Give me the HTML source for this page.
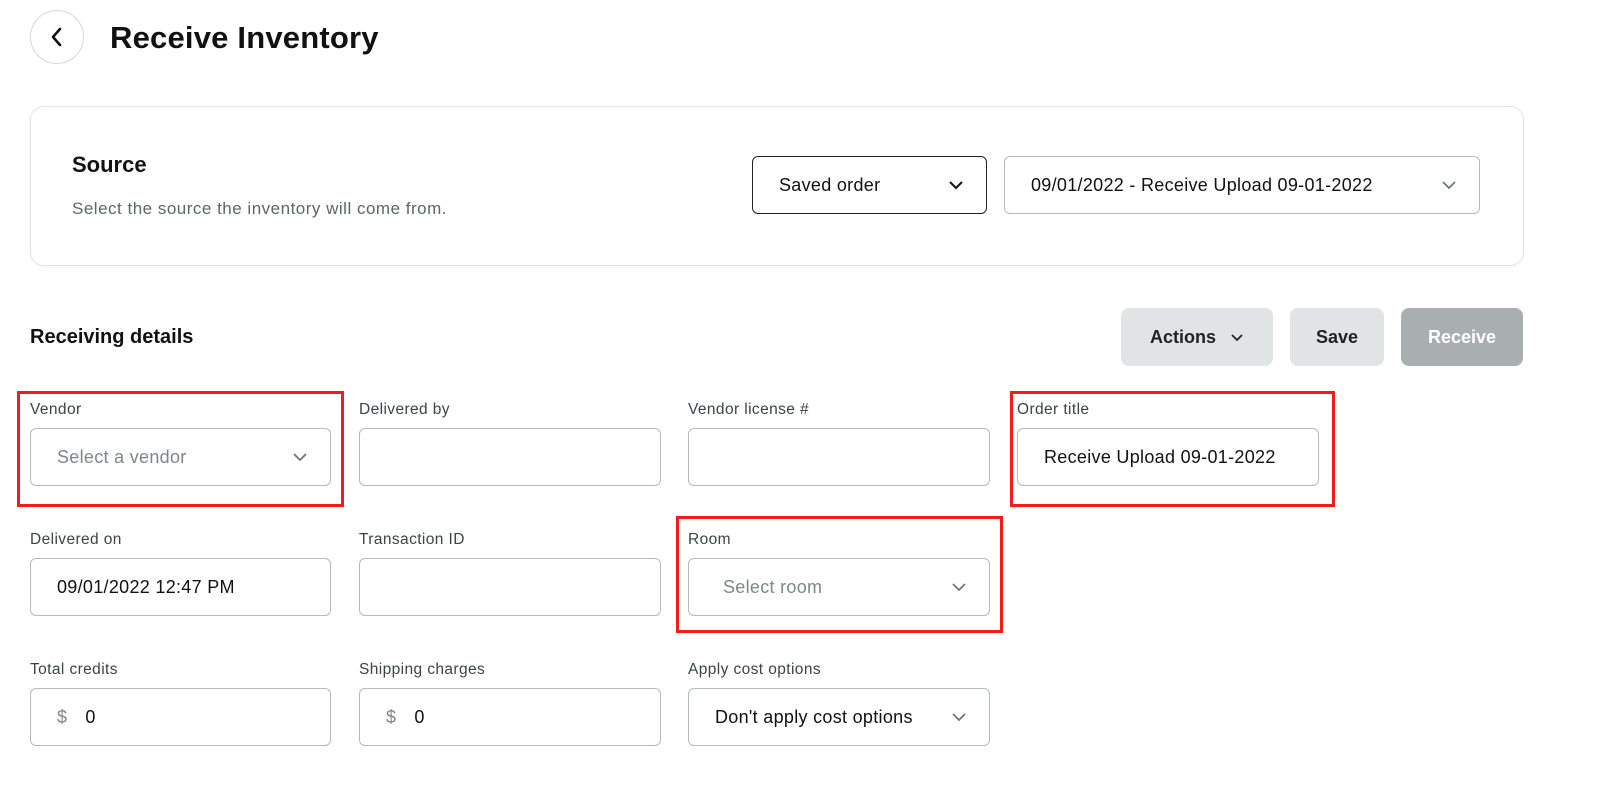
<!DOCTYPE html>
<html><head><style>
*{box-sizing:border-box;margin:0;padding:0}
body{width:1600px;height:792px;background:#fff;font-family:"Liberation Sans",sans-serif;color:#111;position:relative;overflow:hidden}
.a{position:absolute}
.back{left:30px;top:10px;width:54px;height:54px;border:1px solid #d5d9db;border-radius:50%}
h1{position:absolute;left:110px;top:20px;font-size:31px;font-weight:bold;letter-spacing:0.2px}
.card{left:30px;top:106px;width:1494px;height:160px;border:1px solid #e2e5e6;border-radius:14px;box-shadow:0 1px 3px rgba(0,0,0,.05)}
.sel{position:absolute;height:58px;border:1px solid #b5babc;border-radius:6px;font-size:18px;letter-spacing:0.3px;display:flex;align-items:center;padding-left:26px}
.sel svg{position:absolute;right:22px;top:22px}
.lbl{position:absolute;font-size:15.5px;letter-spacing:0.4px;color:#3b4446}
.ph{color:#7d8689}
.btn{position:absolute;top:308px;height:58px;border-radius:8px;background:#e1e4e5;font-size:18px;font-weight:bold;display:flex;align-items:center;justify-content:center;color:#222}
.red{position:absolute;border:3px solid #f21c1c}
</style></head><body>
<div class="a back"><svg width="54" height="54" style="position:absolute;left:-1px;top:-1px"><path d="M30 19 L23 27 L30 35" fill="none" stroke="#111" stroke-width="2.6" stroke-linecap="round" stroke-linejoin="round"/></svg></div>
<h1>Receive Inventory</h1>
<div class="a card"></div>
<div class="a" style="left:72px;top:152px;font-size:22px;font-weight:bold">Source</div>
<div class="a" style="left:72px;top:199px;font-size:17px;letter-spacing:0.5px;color:#5c6769">Select the source the inventory will come from.</div>
<div class="sel" style="left:752px;top:156px;width:235px;border-color:#222">Saved order<svg width="16" height="12"><path d="M2 3 L8 9 L14 3" fill="none" stroke="#111" stroke-width="2"/></svg></div>
<div class="sel" style="left:1004px;top:156px;width:476px">09/01/2022 - Receive Upload 09-01-2022<svg width="16" height="12"><path d="M2 3 L8 9 L14 3" fill="none" stroke="#6d7679" stroke-width="1.8"/></svg></div>
<div class="a" style="left:30px;top:326px;font-size:20px;font-weight:bold">Receiving details</div>
<div class="btn" style="left:1121px;width:152px">Actions<svg width="14" height="10" style="margin-left:14px"><path d="M2 3 L7 8 L12 3" fill="none" stroke="#222" stroke-width="1.8"/></svg></div>
<div class="btn" style="left:1290px;width:94px">Save</div>
<div class="btn" style="left:1401px;width:122px;background:#a9afb1;color:#fff">Receive</div>

<div class="lbl" style="left:30px;top:401px">Vendor</div>
<div class="sel ph" style="left:30px;top:428px;width:301px">Select a vendor<svg width="16" height="12"><path d="M2 3 L8 9 L14 3" fill="none" stroke="#6d7679" stroke-width="1.8"/></svg></div>
<div class="lbl" style="left:359px;top:401px">Delivered by</div>
<div class="sel" style="left:359px;top:428px;width:302px"></div>
<div class="lbl" style="left:688px;top:401px">Vendor license #</div>
<div class="sel" style="left:688px;top:428px;width:302px"></div>
<div class="lbl" style="left:1017px;top:401px">Order title</div>
<div class="sel" style="left:1017px;top:428px;width:302px">Receive Upload 09-01-2022</div>

<div class="lbl" style="left:30px;top:531px">Delivered on</div>
<div class="sel" style="left:30px;top:558px;width:301px">09/01/2022 12:47 PM</div>
<div class="lbl" style="left:359px;top:531px">Transaction ID</div>
<div class="sel" style="left:359px;top:558px;width:302px"></div>
<div class="lbl" style="left:688px;top:531px">Room</div>
<div class="sel ph" style="left:688px;top:558px;width:302px;padding-left:34px">Select room<svg width="16" height="12"><path d="M2 3 L8 9 L14 3" fill="none" stroke="#6d7679" stroke-width="1.8"/></svg></div>

<div class="lbl" style="left:30px;top:661px">Total credits</div>
<div class="sel" style="left:30px;top:688px;width:301px"><span class="ph">$</span><span style="margin-left:18px">0</span></div>
<div class="lbl" style="left:359px;top:661px">Shipping charges</div>
<div class="sel" style="left:359px;top:688px;width:302px"><span class="ph">$</span><span style="margin-left:18px">0</span></div>
<div class="lbl" style="left:688px;top:661px">Apply cost options</div>
<div class="sel" style="left:688px;top:688px;width:302px">Don't apply cost options<svg width="16" height="12"><path d="M2 3 L8 9 L14 3" fill="none" stroke="#6d7679" stroke-width="1.8"/></svg></div>

<div class="red" style="left:17px;top:391px;width:327px;height:116px"></div>
<div class="red" style="left:1010px;top:391px;width:325px;height:116px"></div>
<div class="red" style="left:676px;top:516px;width:327px;height:117px"></div>
</body></html>
